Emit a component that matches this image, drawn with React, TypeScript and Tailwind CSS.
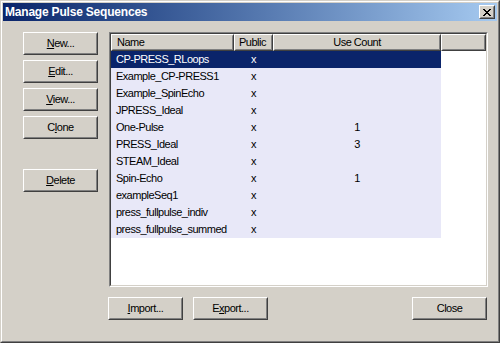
import React from "react";

const rows: { name: string; pub: string; count: string }[] = [
  { name: "CP-PRESS_RLoops", pub: "x", count: "" },
  { name: "Example_CP-PRESS1", pub: "x", count: "" },
  { name: "Example_SpinEcho", pub: "x", count: "" },
  { name: "JPRESS_Ideal", pub: "x", count: "" },
  { name: "One-Pulse", pub: "x", count: "1" },
  { name: "PRESS_Ideal", pub: "x", count: "3" },
  { name: "STEAM_Ideal", pub: "x", count: "" },
  { name: "Spin-Echo", pub: "x", count: "1" },
  { name: "exampleSeq1", pub: "x", count: "" },
  { name: "press_fullpulse_indiv", pub: "x", count: "" },
  { name: "press_fullpulse_summed", pub: "x", count: "" },
];

function Btn({ children, className = "" }: { children: React.ReactNode; className?: string }) {
  return (
    <div
      className={
        "w-[75px] h-[23px] shrink-0 border border-t-white border-l-white border-r-[#404040] border-b-[#404040] " +
        className
      }
    >
      <div className="w-full h-full border border-transparent border-r-[#808080] border-b-[#808080] flex items-center justify-center text-black">
        {children}
      </div>
    </div>
  );
}

function HeaderCell({ children, className = "" }: { children?: React.ReactNode; className?: string }) {
  return (
    <div
      className={
        "h-[17px] border border-t-white border-l-white border-r-[#404040] border-b-[#404040] " + className
      }
    >
      <div className="w-full h-full border border-transparent border-r-[#808080] border-b-[#808080] flex items-center leading-none">
        {children}
      </div>
    </div>
  );
}

export default function App() {
  return (
    <div
      className="w-[500px] h-[343px] bg-[#d4d0c8] border border-t-[#d4d0c8] border-l-[#d4d0c8] border-r-[#404040] border-b-[#404040] text-[11px] tracking-[-0.5px] text-black"
      style={{ fontFamily: '"Liberation Sans", Arial, sans-serif' }}
    >
      <div className="w-full h-full border border-t-white border-l-white border-r-[#808080] border-b-[#808080] p-px flex flex-col">
        {/* Title bar */}
        <div className="h-[18px] bg-gradient-to-r from-[#0a246a] to-[#a6caf0] flex items-center justify-between pl-[2px] pr-[2px]">
          <span className="text-white font-bold text-[12px] tracking-[-0.2px] leading-none">Manage Pulse Sequences</span>
          <div className="w-[16px] h-[14px] bg-[#d4d0c8] border border-t-white border-l-white border-r-[#404040] border-b-[#404040]">
            <div className="w-full h-full border border-transparent border-r-[#808080] border-b-[#808080] flex items-center justify-center">
              <svg width="8" height="7" viewBox="0 0 8 7">
                <path d="M0 0h2v1h-2zM6 0h2v1h-2zM1 1h2v1h-2zM5 1h2v1h-2zM2 2h4v1h-4zM3 3h2v1h-2zM2 4h4v1h-4zM1 5h2v1h-2zM5 5h2v1h-2zM0 6h2v1h-2zM6 6h2v1h-2z" fill="#000" />
              </svg>
            </div>
          </div>
        </div>

        {/* Client */}
        <div className="flex-1 pt-[11px] pl-[20px] flex flex-col">
          <div className="flex gap-[11px]">
            <div className="flex flex-col">
              <Btn><span><u>N</u>ew...</span></Btn>
              <Btn className="mt-[5px]"><span><u>E</u>dit...</span></Btn>
              <Btn className="mt-[5px]"><span><u>V</u>iew...</span></Btn>
              <Btn className="mt-[5px]"><span>C<u>l</u>one</span></Btn>
              <Btn className="mt-[30px]"><span><u>D</u>elete</span></Btn>
            </div>
            {/* List */}
            <div className="w-[379px] h-[255px] border border-t-[#808080] border-l-[#808080] border-r-white border-b-white">
              <div className="w-full h-full border border-t-[#404040] border-l-[#404040] border-r-[#d4d0c8] border-b-[#d4d0c8] bg-white flex flex-col">
                <div className="flex bg-[#d4d0c8]">
                  <HeaderCell className="w-[123px]"><span className="pl-[4px]">Name</span></HeaderCell>
                  <HeaderCell className="w-[39px]"><span className="pl-[3px]">Public</span></HeaderCell>
                  <HeaderCell className="w-[168px]"><span className="w-full text-center">Use Count</span></HeaderCell>
                  <HeaderCell className="w-[45px]" />
                </div>
                <div className="flex flex-col w-[330px]">
                  {rows.map((r, i) => {
                    const sel = i === 0;
                    return (
                      <div
                        key={r.name}
                        className={
                          "h-[17px] flex items-center " +
                          (sel ? "bg-[#0a246a] text-white" : "bg-[#e8e8f8] text-black")
                        }
                      >
                        <span className="w-[123px] pl-[5px] whitespace-nowrap">{r.name}</span>
                        <span className="w-[39px] text-center">{r.pub}</span>
                        <span className="w-[168px] text-center">{r.count}</span>
                      </div>
                    );
                  })}
                </div>
              </div>
            </div>
          </div>
          <div className="flex mt-[10px] pl-[85px] w-[464px]">
            <Btn><span><u>I</u>mport...</span></Btn>
            <Btn className="ml-[10px]"><span>E<u>x</u>port...</span></Btn>
            <Btn className="ml-auto"><span>Close</span></Btn>
          </div>
        </div>
      </div>
    </div>
  );
}
